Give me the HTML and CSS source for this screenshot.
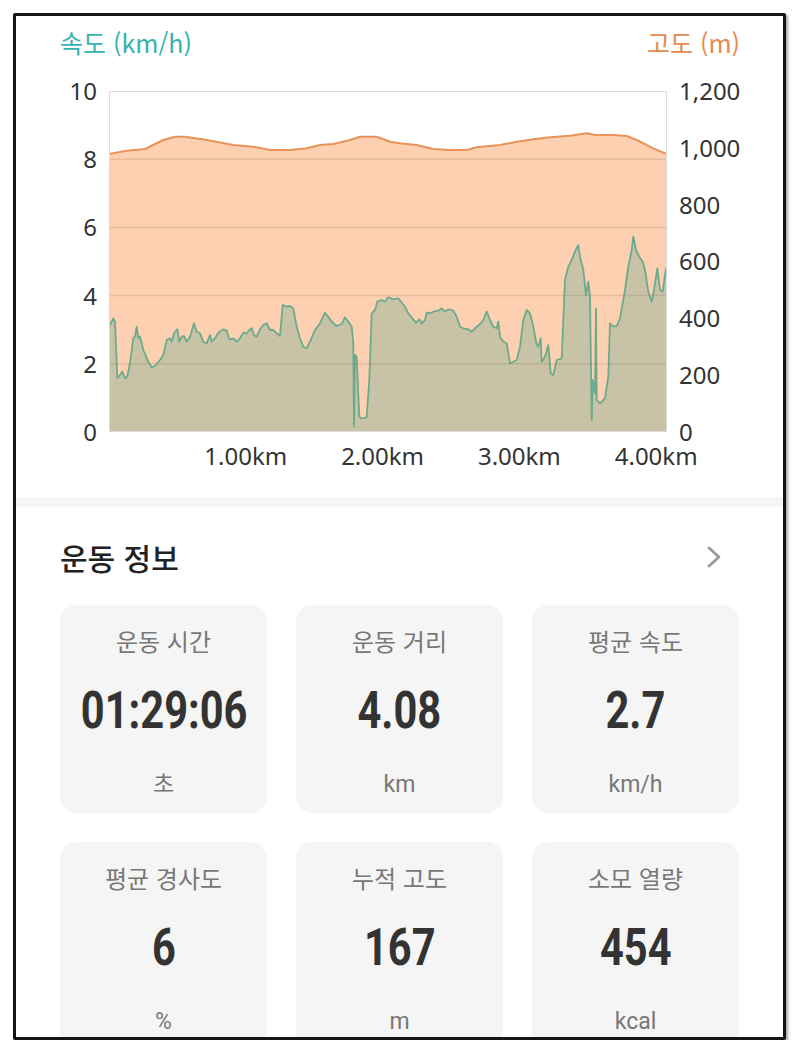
FILE: index.html
```html
<!DOCTYPE html>
<html lang="ko">
<head>
    <meta charset="UTF-8">
    <meta name="viewport" content="width=device-width, initial-scale=1.0">
    <title>운동 기록</title>
    <link rel="stylesheet" href="styles.css">
</head>
<body>
    <div class="frame">
        <section class="chart-section">
            <div class="legend">
                <span class="legend-speed">속도 (km/h)</span>
                <span class="legend-alt">고도 (m)</span>
            </div>

            <div class="chart">
                <div class="y-axis y-left">
                    <span>10</span><span>8</span><span>6</span><span>4</span><span>2</span><span>0</span>
                </div>

                <svg class="plot" viewBox="109 91 558 341" width="558" height="341">
                    <!-- altitude -->
                    <path class="alt-fill" d="M109,154 L126.7,150.7 145,149 163.3,140 175,136.7 185,136.7 206.7,140 233.3,145 253.3,146.7 270,150 290,150 306.7,148.3 320,145 333.3,144 350,140 360,136.7 376.7,136.7 390,141.7 400,143.3 416.7,145 433.3,149 450,150 466.7,150 476.7,147.3 500,145 516.7,141.7 533.3,139.3 550,137.3 570,135.7 586.7,133.3 595,135 613.3,135 626.7,136 636.7,140 653.3,148.3 667,154 L667,432 L109,432 Z"/>
                    <path class="alt-line" d="M109,154 L126.7,150.7 145,149 163.3,140 175,136.7 185,136.7 206.7,140 233.3,145 253.3,146.7 270,150 290,150 306.7,148.3 320,145 333.3,144 350,140 360,136.7 376.7,136.7 390,141.7 400,143.3 416.7,145 433.3,149 450,150 466.7,150 476.7,147.3 500,145 516.7,141.7 533.3,139.3 550,137.3 570,135.7 586.7,133.3 595,135 613.3,135 626.7,136 636.7,140 653.3,148.3 667,154"/>

                    <!-- speed -->
                    <path class="speed-fill" d="M109,327 L113.3,318.3 115,321.7 117.3,378.3 120,375 122.3,371.7 125,378.3 127.3,376.7 130,363 133.3,338.3 135,336.7 136.7,326.7 138.3,338.3 140,336.7 143.3,350 148.3,361.7 151.7,367.3 155,366 160,360 163.3,355 166.7,340 170,338.3 171.7,341.7 174,333.3 177.3,329.3 179.3,341.7 181.7,336.7 184,336 186.7,341.7 190,336.7 194,323.3 196.7,331.7 200,333.3 203.3,341.7 206.7,343.3 210,335 211.7,341.7 215,338.3 218.3,332.7 223.3,329.3 226.7,330.7 229.3,339.3 233.3,338.3 236.7,341.7 240,338.3 243.3,332.7 246.7,333.3 249.3,330 251.7,328.3 254,335 256.7,336.7 260,329.3 263.3,325 266.7,323.3 270,330 273.3,330 276.7,333.3 280,336 282.7,305 286.7,306.7 290,306 293.3,308.3 296.7,326.7 300,338.3 303.3,346.7 306.7,348.3 310,341.7 315,330 320,323.3 325,312.7 328.3,316.7 331.7,321.7 336.7,326 341.7,324 345,317.3 348.3,321.7 351.7,326.7 353.3,343.3 354,426.7 355,355 356.7,356.7 359.3,416.7 361.7,418.3 366.7,417.3 369.3,380 371.7,313.3 375,310 377.3,301.7 381.7,300 385,301.7 388.3,297.3 393.3,299.3 398.3,298.3 401.7,302.7 405,306.7 408.3,313.3 413.3,319.3 416,322.7 419.3,319.3 421.7,323.3 425,320 426.7,312.7 430,313.3 433.3,311.7 438.3,310.7 441.7,308.3 445,311.7 448.3,309.3 453.3,310.7 456.7,316.7 460,326.7 463.3,328.3 468.3,329.3 471.7,331.7 475,328.3 480,324 483.3,320 486.7,311.7 490,320 493.3,326.7 496.7,328.3 498.3,321.7 500,336.7 503.3,341.7 506.7,343.3 510,363.3 513.3,361.7 516.7,360 520,346.7 523.3,320 526.7,310 530,313.3 533.3,326.7 536.7,345 538.3,346.7 540.7,338.3 541.7,361.7 545,356.7 548.3,345 550.7,373.3 553.3,375 556.7,360 561.7,358.3 565,280 568.3,266.7 571.7,260 575,251.7 578.3,245 580,256.7 583.3,270 586,295 588.3,281.7 590,296.7 591.7,420 592.7,380 595,393.3 596,308.3 596.7,400 600,403.3 605,398.3 608.3,376.7 610,323.3 613.3,326.7 616.7,326 620,318.3 625,290 628.3,266.7 631.7,250 633.3,236.7 636,250 639.3,256.7 642.7,261.7 645,270 648.3,291.7 651.7,301.7 654,290 657.3,268.3 660,290 662.7,291.7 666,268.3 667,268 L667,432 L109,432 Z"/>
                    <path class="speed-line" d="M109,432 L109,327 113.3,318.3 115,321.7 117.3,378.3 120,375 122.3,371.7 125,378.3 127.3,376.7 130,363 133.3,338.3 135,336.7 136.7,326.7 138.3,338.3 140,336.7 143.3,350 148.3,361.7 151.7,367.3 155,366 160,360 163.3,355 166.7,340 170,338.3 171.7,341.7 174,333.3 177.3,329.3 179.3,341.7 181.7,336.7 184,336 186.7,341.7 190,336.7 194,323.3 196.7,331.7 200,333.3 203.3,341.7 206.7,343.3 210,335 211.7,341.7 215,338.3 218.3,332.7 223.3,329.3 226.7,330.7 229.3,339.3 233.3,338.3 236.7,341.7 240,338.3 243.3,332.7 246.7,333.3 249.3,330 251.7,328.3 254,335 256.7,336.7 260,329.3 263.3,325 266.7,323.3 270,330 273.3,330 276.7,333.3 280,336 282.7,305 286.7,306.7 290,306 293.3,308.3 296.7,326.7 300,338.3 303.3,346.7 306.7,348.3 310,341.7 315,330 320,323.3 325,312.7 328.3,316.7 331.7,321.7 336.7,326 341.7,324 345,317.3 348.3,321.7 351.7,326.7 353.3,343.3 354,426.7 355,355 356.7,356.7 359.3,416.7 361.7,418.3 366.7,417.3 369.3,380 371.7,313.3 375,310 377.3,301.7 381.7,300 385,301.7 388.3,297.3 393.3,299.3 398.3,298.3 401.7,302.7 405,306.7 408.3,313.3 413.3,319.3 416,322.7 419.3,319.3 421.7,323.3 425,320 426.7,312.7 430,313.3 433.3,311.7 438.3,310.7 441.7,308.3 445,311.7 448.3,309.3 453.3,310.7 456.7,316.7 460,326.7 463.3,328.3 468.3,329.3 471.7,331.7 475,328.3 480,324 483.3,320 486.7,311.7 490,320 493.3,326.7 496.7,328.3 498.3,321.7 500,336.7 503.3,341.7 506.7,343.3 510,363.3 513.3,361.7 516.7,360 520,346.7 523.3,320 526.7,310 530,313.3 533.3,326.7 536.7,345 538.3,346.7 540.7,338.3 541.7,361.7 545,356.7 548.3,345 550.7,373.3 553.3,375 556.7,360 561.7,358.3 565,280 568.3,266.7 571.7,260 575,251.7 578.3,245 580,256.7 583.3,270 586,295 588.3,281.7 590,296.7 591.7,420 592.7,380 595,393.3 596,308.3 596.7,400 600,403.3 605,398.3 608.3,376.7 610,323.3 613.3,326.7 616.7,326 620,318.3 625,290 628.3,266.7 631.7,250 633.3,236.7 636,250 639.3,256.7 642.7,261.7 645,270 648.3,291.7 651.7,301.7 654,290 657.3,268.3 660,290 662.7,291.7 666,268.3 667,268"/>

                    <!-- grid -->
                    <g class="grid">
                        <line x1="109" y1="159.2" x2="667" y2="159.2"/>
                        <line x1="109" y1="227.4" x2="667" y2="227.4"/>
                        <line x1="109" y1="295.6" x2="667" y2="295.6"/>
                        <line x1="109" y1="363.8" x2="667" y2="363.8"/>
                    </g>
                    <path class="frame-line" d="M109.5,432 L109.5,91.5 L666.5,91.5 L666.5,432 M109,431.5 L667,431.5"/>
                </svg>

                <div class="y-axis y-right">
                    <span>1,200</span><span>1,000</span><span>800</span><span>600</span><span>400</span><span>200</span><span>0</span>
                </div>

                <div class="x-axis">
                    <span>1.00km</span><span>2.00km</span><span>3.00km</span><span>4.00km</span>
                </div>
            </div>
        </section>

        <div class="divider"></div>

        <section class="info-section">
            <div class="info-header">
                <h2>운동 정보</h2>
                <svg class="chevron" width="16" height="24" viewBox="0 0 16 24">
                    <polyline points="3,3 13,12 3,21"/>
                </svg>
            </div>

            <div class="stat-grid">
                <div class="stat-card">
                    <div class="stat-label">운동 시간</div>
                    <div class="stat-value"><span>01:29:06</span></div>
                    <div class="stat-unit">초</div>
                </div>
                <div class="stat-card">
                    <div class="stat-label">운동 거리</div>
                    <div class="stat-value"><span>4.08</span></div>
                    <div class="stat-unit">km</div>
                </div>
                <div class="stat-card">
                    <div class="stat-label">평균 속도</div>
                    <div class="stat-value"><span>2.7</span></div>
                    <div class="stat-unit">km/h</div>
                </div>
                <div class="stat-card">
                    <div class="stat-label">평균 경사도</div>
                    <div class="stat-value"><span>6</span></div>
                    <div class="stat-unit">%</div>
                </div>
                <div class="stat-card">
                    <div class="stat-label">누적 고도</div>
                    <div class="stat-value"><span>167</span></div>
                    <div class="stat-unit">m</div>
                </div>
                <div class="stat-card">
                    <div class="stat-label">소모 열량</div>
                    <div class="stat-value"><span>454</span></div>
                    <div class="stat-unit">kcal</div>
                </div>
            </div>
        </section>
    </div>
</body>
</html>
```

FILE: styles.css
```css
/* page */
body {
    margin: 0;
    background-color: #fff;
    font-family: "Noto Sans CJK KR", "Noto Sans", sans-serif;
}

.frame {
    box-sizing: border-box;
    width: 773px;
    height: 1027px;
    margin: 13px 0 0 13px;
    border: 3px solid #151515;
    border-radius: 2px;
    box-shadow: 2px 2px 3px rgba(0, 0, 0, 0.35);
    overflow: hidden;
    background-color: #fff;
}

/* chart */
.chart-section {
    height: 481px;
    padding-top: 10px;
    box-sizing: border-box;
}

.legend {
    display: flex;
    justify-content: space-between;
    padding: 0 43px 0 44px;
    font-size: 25px;
    line-height: 32px;
}

.legend-speed {
    color: #35b3ae;
}

.legend-alt {
    color: #e58a4e;
}

.chart {
    display: grid;
    grid-template-columns: 81px 558px 1fr;
    column-gap: 12px;
    margin-top: 22px;
}

.y-axis {
    display: flex;
    flex-direction: column;
    justify-content: space-between;
    height: 363px;
    font-family: "Noto Sans", sans-serif;
    font-size: 24px;
    line-height: 22px;
    color: #333;
}

.y-left {
    text-align: right;
}

.plot {
    display: block;
    margin-top: 11px;
}

.alt-fill {
    fill: #fdd0b2;
}

.alt-line {
    fill: none;
    stroke: #e8935a;
    stroke-width: 2;
    stroke-linejoin: round;
}

.speed-fill {
    fill: #c8c3a7;
}

.speed-line {
    fill: none;
    stroke: #6caa8c;
    stroke-width: 1.8;
    stroke-linejoin: round;
}

.grid line {
    stroke: rgba(120, 80, 50, 0.16);
    stroke-width: 1.5;
}

.frame-line {
    fill: none;
    stroke: #dcdcdc;
    stroke-width: 1;
}

.x-axis {
    grid-column: 2;
    display: flex;
    margin: 2px 0 0 68.4px;
    font-family: "Noto Sans", sans-serif;
    font-size: 24px;
    line-height: 22px;
    color: #333;
}

.x-axis span {
    flex: 0 0 136.8px;
    text-align: center;
}

.divider {
    height: 10px;
    background-color: #f6f6f6;
}

/* info */
.info-section {
    padding: 30px 43px 0 44px;
}

.info-header {
    display: flex;
    align-items: center;
    justify-content: space-between;
    height: 40px;
}

.info-header h2 {
    margin: 0;
    font-size: 30px;
    font-weight: 500;
    color: #222;
}

.chevron {
    margin-right: 18px;
}

.chevron polyline {
    fill: none;
    stroke: #999;
    stroke-width: 2.8;
    stroke-linecap: round;
    stroke-linejoin: round;
}

.stat-grid {
    display: grid;
    grid-template-columns: repeat(3, 207px);
    gap: 29px;
    margin-top: 28px;
}

.stat-card {
    height: 208px;
    box-sizing: border-box;
    padding-top: 21px;
    border-radius: 16px;
    background-color: #f5f5f5;
    text-align: center;
}

.stat-label {
    font-size: 24px;
    line-height: 30px;
    color: #777;
}

.stat-value {
    margin-top: 25px;
    font-family: Roboto, "Noto Sans", sans-serif;
    font-size: 52px;
    font-weight: 700;
    line-height: 60px;
    color: #333;
}

.stat-value span {
    display: inline-block;
    transform: scaleX(0.8);
}

.stat-unit {
    margin-top: 29px;
    font-family: Roboto, "Noto Sans CJK KR", sans-serif;
    font-size: 23px;
    line-height: 30px;
    color: #777;
}
```
